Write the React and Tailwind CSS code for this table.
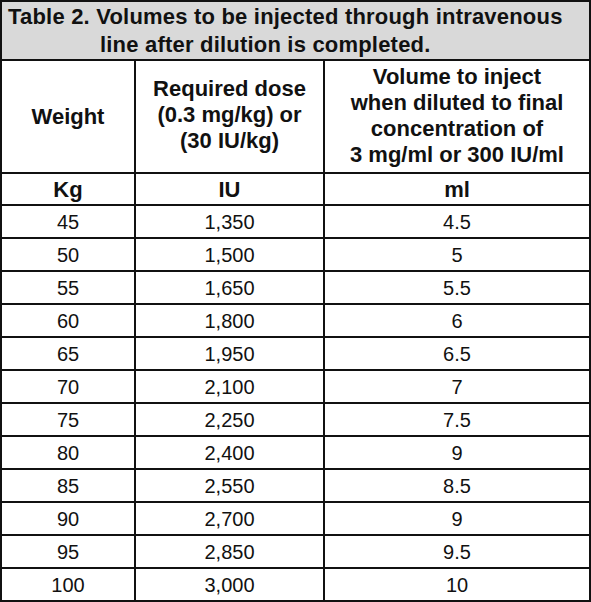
const ROWS = [
  ["45", "1,350", "4.5"],
  ["50", "1,500", "5"],
  ["55", "1,650", "5.5"],
  ["60", "1,800", "6"],
  ["65", "1,950", "6.5"],
  ["70", "2,100", "7"],
  ["75", "2,250", "7.5"],
  ["80", "2,400", "9"],
  ["85", "2,550", "8.5"],
  ["90", "2,700", "9"],
  ["95", "2,850", "9.5"],
  ["100", "3,000", "10"],
];

export default function App() {
  return (
    <div className="w-[591px] h-[602px] bg-white font-['Liberation_Sans',Arial,sans-serif] text-[#111]">
      <div className="grid grid-cols-[132px_187px_264px] gap-[2px] bg-[#111] p-[2px]">
        <div className="col-span-3 h-[57px] bg-[#d9d9d9] flex flex-col justify-center pl-[6px] text-[22px] leading-[28px] tracking-[0.2px] font-bold whitespace-nowrap">
          <span>Table 2. Volumes to be injected through intravenous</span>
          <span className="pl-[92px]">line after dilution is completed.</span>
        </div>

        <div className="h-[111px] bg-white flex items-center justify-center text-[22px] leading-[26px] font-bold">
          Weight
        </div>
        <div className="h-[111px] bg-white flex flex-col items-center justify-center text-center text-[22px] leading-[26px] font-bold pb-[3px]">
          <span>Required dose</span>
          <span>(0.3 mg/kg) or</span>
          <span>(30 IU/kg)</span>
        </div>
        <div className="h-[111px] bg-white flex flex-col items-center justify-center text-center text-[22px] leading-[26px] font-bold pb-[2px]">
          <span>Volume to inject</span>
          <span>when diluted to final</span>
          <span>concentration of</span>
          <span>3 mg/ml or 300 IU/ml</span>
        </div>

        {["Kg", "IU", "ml"].map((u) => (
          <div key={u} className="h-[30px] bg-white flex items-center justify-center text-[22px] font-bold">
            {u}
          </div>
        ))}

        {ROWS.map((row) =>
          row.map((cell, i) => (
            <div
              key={row[0] + "-" + i}
              className="h-[31px] bg-white flex items-center justify-center text-[20px]"
            >
              {cell}
            </div>
          ))
        )}
      </div>
    </div>
  );
}
